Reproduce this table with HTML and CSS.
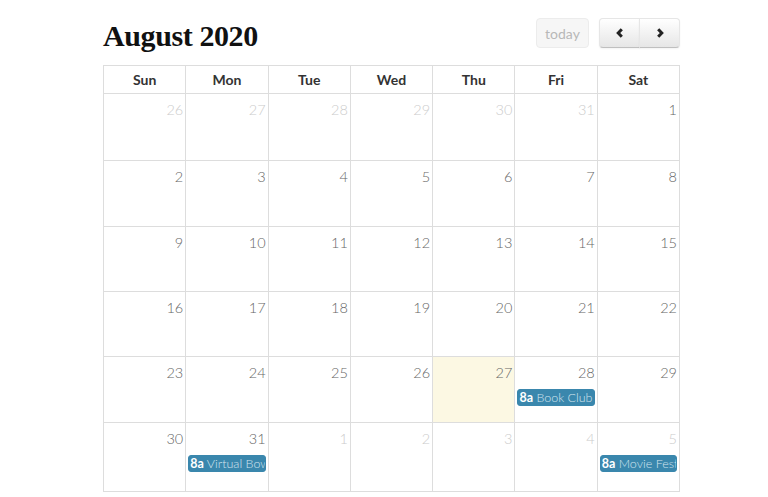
FILE: index.html
```html
<!DOCTYPE html>
<html>
<head>
<meta charset="utf-8">
<link rel="stylesheet" href="styles.css">
</head>
<body>
<div class="calendar">
  <div class="toolbar">
    <h2 class="title">August 2020</h2>
    <div class="controls">
      <button class="btn btn-today" disabled>today</button>
      <div class="btn-group">
        <button class="btn btn-nav btn-left" aria-label="prev">
          <svg width="10" height="12" viewBox="0 0 10 12"><path d="M6.8 2.2 L3.2 6 L6.8 9.8" fill="none" stroke="#222" stroke-width="3" stroke-linecap="butt" stroke-linejoin="miter"/></svg>
        </button>
        <button class="btn btn-nav btn-right" aria-label="next">
          <svg width="10" height="12" viewBox="0 0 10 12"><path d="M3.2 2.2 L6.8 6 L3.2 9.8" fill="none" stroke="#222" stroke-width="3" stroke-linecap="butt" stroke-linejoin="miter"/></svg>
        </button>
      </div>
    </div>
  </div>
  <div class="grid">
    <div class="head">Sun</div><div class="head">Mon</div><div class="head">Tue</div><div class="head">Wed</div><div class="head">Thu</div><div class="head">Fri</div><div class="head">Sat</div>

    <div class="day other"><span class="num">26</span></div>
    <div class="day other"><span class="num">27</span></div>
    <div class="day other"><span class="num">28</span></div>
    <div class="day other"><span class="num">29</span></div>
    <div class="day other"><span class="num">30</span></div>
    <div class="day other"><span class="num">31</span></div>
    <div class="day"><span class="num">1</span></div>

    <div class="day"><span class="num">2</span></div>
    <div class="day"><span class="num">3</span></div>
    <div class="day"><span class="num">4</span></div>
    <div class="day"><span class="num">5</span></div>
    <div class="day"><span class="num">6</span></div>
    <div class="day"><span class="num">7</span></div>
    <div class="day"><span class="num">8</span></div>

    <div class="day"><span class="num">9</span></div>
    <div class="day"><span class="num">10</span></div>
    <div class="day"><span class="num">11</span></div>
    <div class="day"><span class="num">12</span></div>
    <div class="day"><span class="num">13</span></div>
    <div class="day"><span class="num">14</span></div>
    <div class="day"><span class="num">15</span></div>

    <div class="day"><span class="num">16</span></div>
    <div class="day"><span class="num">17</span></div>
    <div class="day"><span class="num">18</span></div>
    <div class="day"><span class="num">19</span></div>
    <div class="day"><span class="num">20</span></div>
    <div class="day"><span class="num">21</span></div>
    <div class="day"><span class="num">22</span></div>

    <div class="day"><span class="num">23</span></div>
    <div class="day"><span class="num">24</span></div>
    <div class="day"><span class="num">25</span></div>
    <div class="day"><span class="num">26</span></div>
    <div class="day today"><span class="num">27</span></div>
    <div class="day"><span class="num">28</span><div class="event" title="Book Club Night"><b>8a</b> Book Club Night</div></div>
    <div class="day"><span class="num">29</span></div>

    <div class="day"><span class="num">30</span></div>
    <div class="day"><span class="num">31</span><div class="event" title="Virtual Bowling"><b>8a</b> Virtual Bowling</div></div>
    <div class="day other"><span class="num">1</span></div>
    <div class="day other"><span class="num">2</span></div>
    <div class="day other"><span class="num">3</span></div>
    <div class="day other"><span class="num">4</span></div>
    <div class="day other"><span class="num">5</span><div class="event" title="Movie Festival"><b>8a</b> Movie Festival</div></div>
  </div>
</div>
</body>
</html>
```

FILE: styles.css
```css
* { box-sizing: border-box; }
html, body { margin: 0; padding: 0; background: #fff; }
body { font-family: Lato, "Open Sans", sans-serif; font-size: 14px; color: #555; }

.calendar { width: 577px; margin-left: 103px; padding-top: 18px; }

.toolbar { display: flex; justify-content: space-between; align-items: flex-start; height: 30px; margin-bottom: 17px; }
.title { margin: 0; font-family: "Liberation Serif", serif; font-weight: bold; font-size: 30px; line-height: 30px; color: #111; letter-spacing: -0.4px; position: relative; top: 3px; }
.controls { display: flex; gap: 10px; }

.btn { height: 30px; padding: 0 9px; font-family: Lato, sans-serif; font-size: 14px; border: 1px solid; border-color: #e6e6e6 #e6e6e6 #bfbfbf; background: #f5f5f5 linear-gradient(#fff, #e6e6e6); border-radius: 4px; color: #333; box-shadow: inset 0 1px 0 rgba(255,255,255,.2), 0 1px 2px rgba(0,0,0,.05); display: flex; align-items: center; justify-content: center; }
.btn-today { width: 53px; background: #f6f6f6; border-color: #ececec; color: #b8b8b8; box-shadow: none; }
.btn-group { display: flex; }
.btn-nav { width: 41px; padding: 0; }
.btn-left { border-radius: 4px 0 0 4px; }
.btn-right { border-radius: 0 4px 4px 0; margin-left: -1px; }

.grid { display: grid; grid-template-columns: repeat(7, 1fr); grid-template-rows: 28px 67px 66px 65px 65px 66px 69px; border-top: 1px solid #ddd; border-left: 1px solid #ddd; }
.head, .day { border-right: 1px solid #ddd; border-bottom: 1px solid #ddd; min-width: 0; }
.head { font-weight: bold; color: #333; text-align: center; line-height: 27px; }
.day { display: flex; flex-direction: column; align-items: stretch; }
.day.today { background: #fcf8e3; }
.num { display: block; text-align: right; padding: 6px 2px 0 0; line-height: 20px; color: #666; font-weight: 300; font-size: 14.5px; }
.other .num { color: #ccc; }
.event { margin: 6px 2px 0 2px; padding: 0 1px; background: #3a87ad; border: 1px solid #3a87ad; border-radius: 3px; color: #d3e4ed; font-size: 12.5px; font-weight: 300; line-height: 15px; white-space: nowrap; overflow: hidden; text-overflow: clip; }
.event b { color: #fff; font-weight: bold; }
```
